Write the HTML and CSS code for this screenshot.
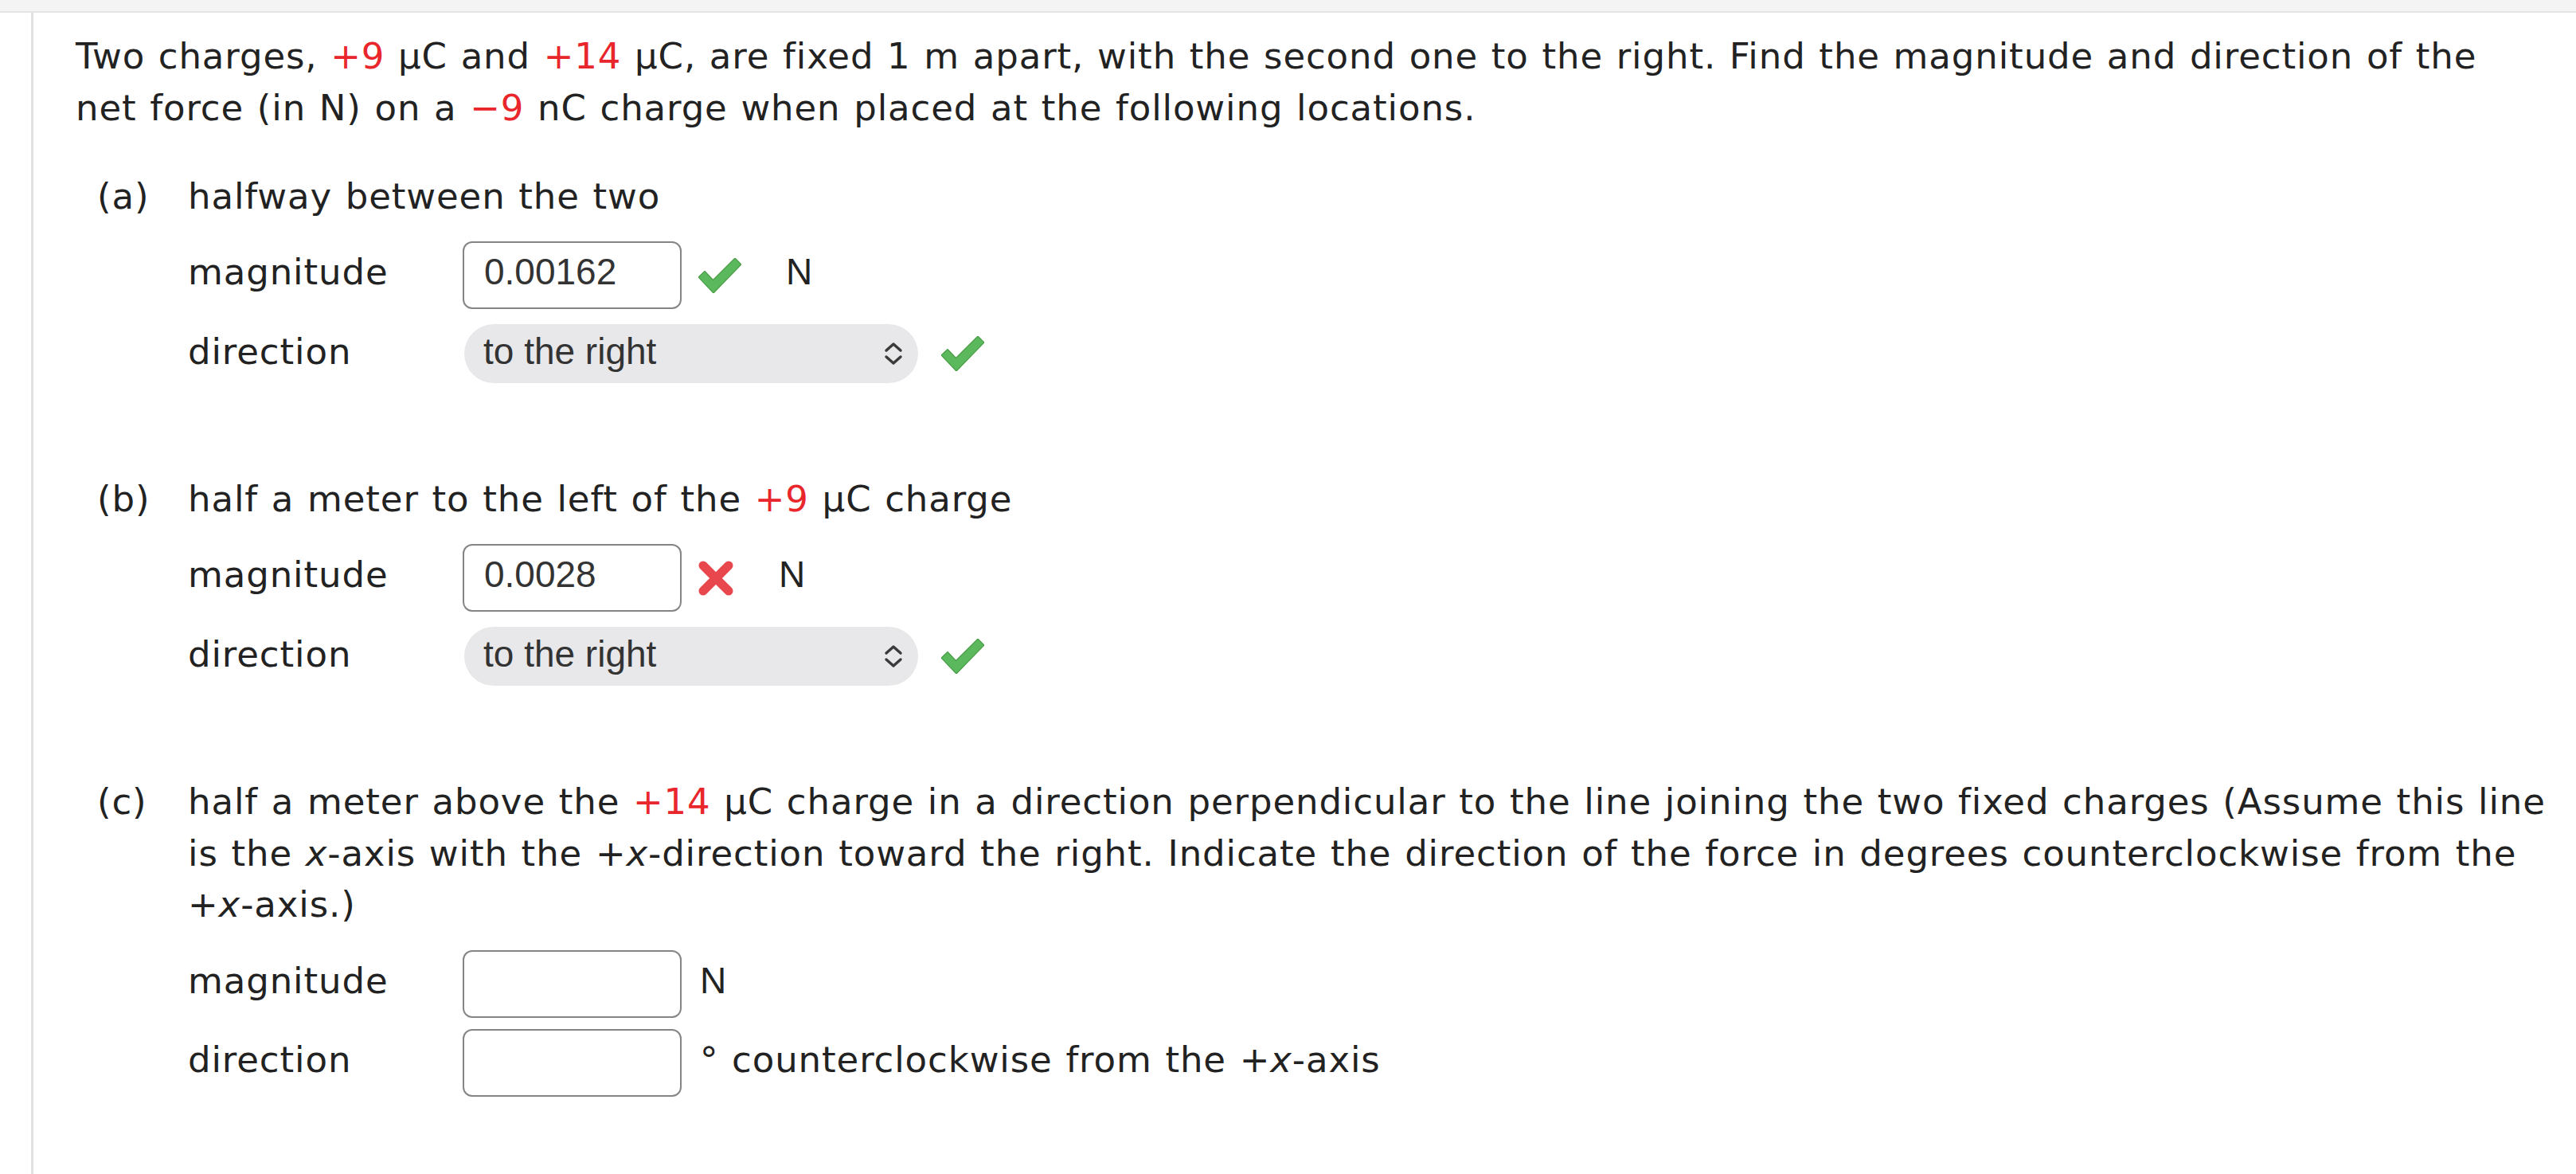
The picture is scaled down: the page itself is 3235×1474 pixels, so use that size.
FILE: index.html
```html
<!DOCTYPE html>
<html lang="en">
<head>
<meta charset="utf-8">
<title>Charges</title>
<link rel="stylesheet" href="styles.css">
</head>
<body>
<div class="topbar"></div>
<main class="content">
  <p class="question">Two charges, <span class="red">+9</span> µC and <span class="red">+14</span> µC, are fixed 1 m apart, with the second one to the right. Find the magnitude and direction of the net force (in N) on a <span class="red">−9</span> nC charge when placed at the following locations.</p>

  <section class="part">
    <div class="part-label">(a)</div>
    <div class="part-body">
      <div class="part-text">halfway between the two</div>
      <div class="rows">
        <div class="row">
          <span class="row-label">magnitude</span>
          <input class="answer" type="text" value="0.00162" readonly>
          <svg class="icon check" viewBox="0 0 54 44" width="54" height="44"><path d="M0 24 L8 16.5 L18.5 27.5 L46 0 L54 8 L19 44 Z" fill="#5cb85c" stroke="#4a9e47" stroke-width="1.2" stroke-linejoin="round"/></svg>
          <span class="unit">N</span>
        </div>
        <div class="row">
          <span class="row-label">direction</span>
          <div class="select"><span class="select-value">to the right</span><svg class="chevron" viewBox="0 0 28 34" width="28" height="34"><path d="M5 13 L14 5 L23 13 M5 21 L14 29 L23 21" fill="none" stroke="#3a3a3a" stroke-width="3.4" stroke-linecap="round" stroke-linejoin="round"/></svg></div>
          <svg class="icon check after-select" viewBox="0 0 54 44" width="54" height="44"><path d="M0 24 L8 16.5 L18.5 27.5 L46 0 L54 8 L19 44 Z" fill="#5cb85c" stroke="#4a9e47" stroke-width="1.2" stroke-linejoin="round"/></svg>
        </div>
      </div>
    </div>
  </section>

  <section class="part">
    <div class="part-label">(b)</div>
    <div class="part-body">
      <div class="part-text">half a meter to the left of the <span class="red">+9</span> µC charge</div>
      <div class="rows">
        <div class="row">
          <span class="row-label">magnitude</span>
          <input class="answer" type="text" value="0.0028" readonly>
          <svg class="icon cross" viewBox="0 0 48 48" width="48" height="48"><path d="M8 8 L40 40 M40 8 L8 40" fill="none" stroke="#e8474e" stroke-width="11" stroke-linecap="round"/></svg>
          <span class="unit">N</span>
        </div>
        <div class="row">
          <span class="row-label">direction</span>
          <div class="select"><span class="select-value">to the right</span><svg class="chevron" viewBox="0 0 28 34" width="28" height="34"><path d="M5 13 L14 5 L23 13 M5 21 L14 29 L23 21" fill="none" stroke="#3a3a3a" stroke-width="3.4" stroke-linecap="round" stroke-linejoin="round"/></svg></div>
          <svg class="icon check after-select" viewBox="0 0 54 44" width="54" height="44"><path d="M0 24 L8 16.5 L18.5 27.5 L46 0 L54 8 L19 44 Z" fill="#5cb85c" stroke="#4a9e47" stroke-width="1.2" stroke-linejoin="round"/></svg>
        </div>
      </div>
    </div>
  </section>

  <section class="part">
    <div class="part-label">(c)</div>
    <div class="part-body">
      <div class="part-text">half a meter above the <span class="red">+14</span> µC charge in a direction perpendicular to the line joining the two fixed charges (Assume this line is the <i>x</i>-axis with the +<i>x</i>-direction toward the right. Indicate the direction of the force in degrees counterclockwise from the +<i>x</i>-axis.)</div>
      <div class="rows tight">
        <div class="row">
          <span class="row-label">magnitude</span>
          <input class="answer" type="text" value="">
          <span class="unit plain">N</span>
        </div>
        <div class="row">
          <span class="row-label">direction</span>
          <input class="answer" type="text" value="">
          <span class="unit plain text-unit">° counterclockwise from the +<i>x</i>-axis</span>
        </div>
      </div>
    </div>
  </section>
</main>
</body>
</html>
```
FILE: styles.css
```css
html, body {
  margin: 0;
  padding: 0;
  background: #ffffff;
}

body {
  font-family: Verdana, "DejaVu Sans", sans-serif;
  font-size: 45px;
  letter-spacing: 0.9px;
  word-spacing: 1.5px;
  color: #222222;
}

.topbar {
  height: 14px;
  background: #f4f4f4;
  border-bottom: 2px solid #e4e4e4;
}

.content {
  margin-left: 39px;
  border-left: 3px solid #e2e2e2;
  padding: 23px 30px 0 53px;
  min-height: 1458px;
  box-sizing: border-box;
}

.question {
  margin: 0;
  max-width: 3055px;
  line-height: 64.5px;
}

.red {
  color: #e8262b;
}

.part {
  display: flex;
  margin-top: 114px;
}

.question + .part {
  margin-top: 47px;
}

.part-label {
  width: 141px;
  padding-left: 27px;
  box-sizing: border-box;
  flex: none;
  line-height: 64.5px;
}

.part-body {
  flex: 1;
  min-width: 0;
}

.part-text {
  line-height: 64.5px;
}

.rows {
  margin-top: 23.5px;
  display: flex;
  flex-direction: column;
  gap: 19px;
}

.rows.tight {
  margin-top: 24px;
  gap: 14px;
}

.row {
  display: flex;
  align-items: baseline;
}

.row-label {
  width: 345px;
  flex: none;
}

.answer {
  width: 275px;
  height: 85px;
  box-sizing: border-box;
  border: 2px solid #858585;
  border-radius: 12px;
  padding: 0 10px 9px 25px;
  margin: 0;
  font-family: "Liberation Sans", Arial, sans-serif;
  font-size: 46px;
  letter-spacing: 0;
  word-spacing: 0;
  color: #333333;
  background: #ffffff;
  outline: none;
  flex: none;
}

.icon {
  align-self: center;
  flex: none;
  display: block;
}

.check {
  margin-left: 21px;
}

.cross {
  margin-left: 19px;
}

.check.after-select {
  margin-left: 29px;
}

.unit {
  font-family: "Liberation Sans", Arial, sans-serif;
  font-size: 46px;
  letter-spacing: 0;
  word-spacing: 0;
  color: #222222;
  margin-left: 56px;
}

.cross + .unit {
  margin-left: 55px;
}

.unit.plain {
  margin-left: 23px;
}

.unit.text-unit {
  font-family: Verdana, "DejaVu Sans", sans-serif;
  font-size: 45px;
  letter-spacing: 0.9px;
  word-spacing: 1.5px;
}

.select {
  width: 570px;
  height: 74px;
  box-sizing: border-box;
  margin-left: 2px;
  border-radius: 37px;
  background: #e8e8ea;
  display: flex;
  align-items: center;
  justify-content: space-between;
  padding: 0 17px 0 24px;
  flex: none;
}

.select-value {
  font-family: "Liberation Sans", Arial, sans-serif;
  font-size: 46px;
  letter-spacing: 0;
  word-spacing: 0;
  color: #333333;
  padding-bottom: 6px;
}

.chevron {
  display: block;
  flex: none;
}
```
